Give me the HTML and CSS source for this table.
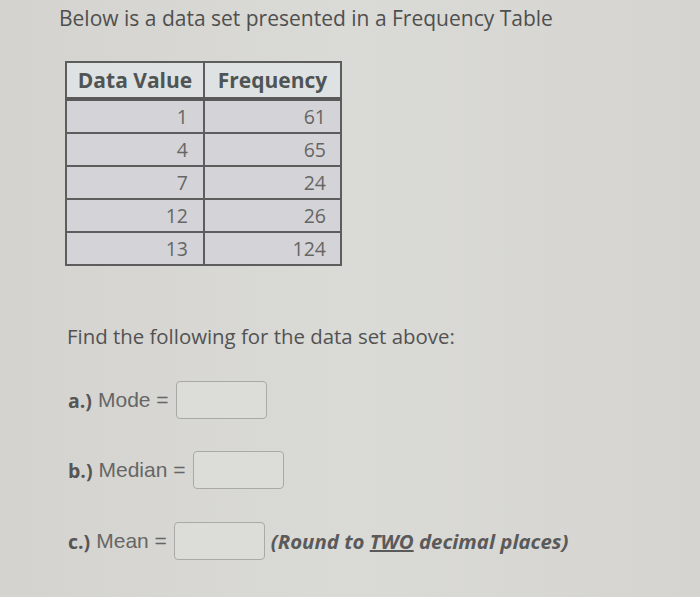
FILE: index.html
```html
<!DOCTYPE html>
<html>
<head>
<meta charset="utf-8">
<link rel="stylesheet" href="styles.css">
</head>
<body>
<div class="page">
  <h1 class="title">Below is a data set presented in a Frequency Table</h1>
  <table class="freq">
    <thead>
      <tr><th>Data Value</th><th>Frequency</th></tr>
    </thead>
    <tbody>
      <tr><td>1</td><td>61</td></tr>
      <tr><td>4</td><td>65</td></tr>
      <tr><td>7</td><td>24</td></tr>
      <tr><td>12</td><td>26</td></tr>
      <tr><td>13</td><td>124</td></tr>
    </tbody>
  </table>
  <p class="prompt">Find the following for the data set above:</p>
  <div class="q q-a"><b class="lbl">a.)</b><span class="name">Mode =</span><span class="box"></span></div>
  <div class="q q-b"><b class="lbl">b.)</b><span class="name">Median =</span><span class="box"></span></div>
  <div class="q q-c"><b class="lbl">c.)</b><span class="name">Mean =</span><span class="box"></span><em class="note">(Round to <u>TWO</u> decimal places)</em></div>
</div>
</body>
</html>
```
FILE: styles.css
```css
html, body {
  margin: 0;
  padding: 0;
  background: #d6d5d1;
}
.page {
  width: 700px;
  height: 597px;
  background: linear-gradient(90deg, #d4d3cf 0%, #dadad6 50%, #d5d4d0 100%);
  font-family: "Open Sans", "Liberation Sans", sans-serif;
  color: #545454;
  overflow: hidden;
}
.title {
  margin: 0;
  padding: 3px 0 0 59px;
  font-size: 21px;
  font-weight: 400;
  line-height: 30px;
  color: #4f4f4f;
}
.freq {
  margin: 28px 0 0 65px;
  border-collapse: collapse;
  border: 2px solid #5d5d5d;
  width: 277px;
}
.freq th {
  background: #dfe2e2;
  font-size: 21px;
  font-weight: 700;
  color: #4f5555;
  height: 34px;
  padding: 0 4px;
  border-left: 2px solid #5d5d5d;
  border-bottom: 4px solid #5a5a5a;
  text-align: center;
  line-height: 34px;
}
.freq th:first-child { border-left: none; width: 128px; }
.freq td {
  background: #d4d4d8;
  font-size: 19.5px;
  color: #666;
  text-align: right;
  height: 31px;
  padding: 0 14px 0 6px;
  border-top: 2px solid #5d5d5d;
  border-left: 2px solid #5d5d5d;
  line-height: 31px;
}
.freq td:first-child { border-left: none; padding-right: 15px; }
.freq tbody tr:first-child td { border-top: none; }
.prompt {
  margin: 57px 0 0 67px;
  font-size: 20.4px;
  line-height: 26px;
  color: #525252;
}
.q {
  display: flex;
  align-items: center;
  padding-left: 68px;
  height: 38px;
}
.q-a { margin-top: 32px; }
.q-b { margin-top: 32px; }
.q-c { margin-top: 33px; }
.lbl {
  font-size: 19.5px;
  font-weight: 700;
  color: #555;
  margin-right: 6px;
}
.name {
  font-family: "Liberation Sans", Arial, sans-serif;
  font-size: 21px;
  color: #666;
  margin-right: 7px;
}
.box {
  display: inline-block;
  width: 89px;
  height: 36px;
  border: 1px solid #a9a9a6;
  border-radius: 4px;
  background: #dcdcd8;
}
.note {
  margin-left: 6px;
  font-size: 20.4px;
  font-weight: 700;
  font-style: italic;
  color: #5a5a5a;
}
.note u { text-decoration-thickness: 2px; }
```
